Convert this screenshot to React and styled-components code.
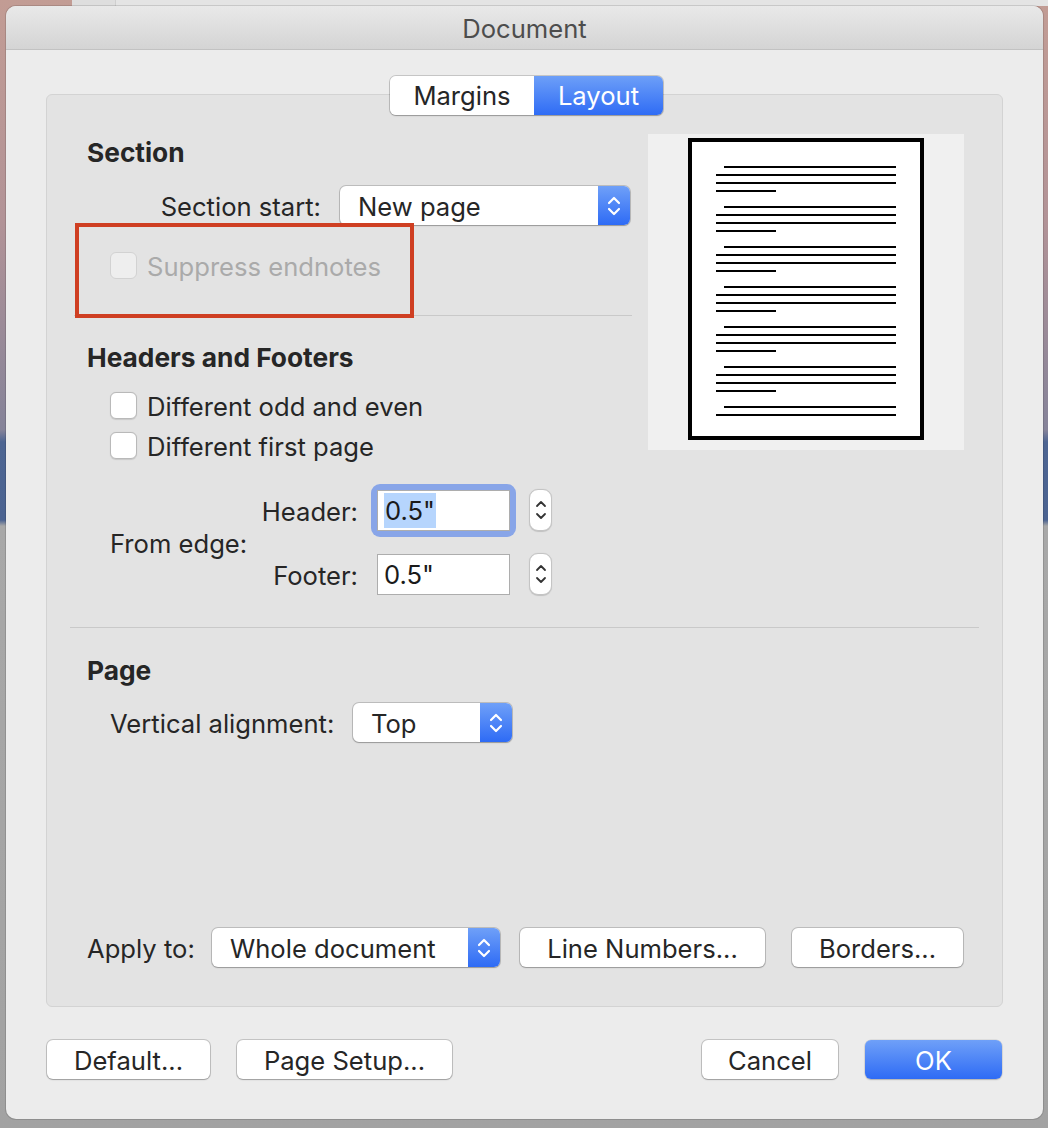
import React from 'react';
import styled, { createGlobalStyle } from 'styled-components';

const FONT = `"Inter", "Noto Sans", "Liberation Sans", sans-serif`;
const TEXT = '#262626';
const FS = '25.6px';

const GlobalStyle = createGlobalStyle`
  html, body { margin: 0; padding: 0; }
  body {
    width: 1048px;
    height: 1128px;
    overflow: hidden;
    font-family: ${FONT};
    -webkit-font-smoothing: antialiased;
  }
`;

const Desktop = styled.div`
  width: 1048px;
  height: 1128px;
  box-sizing: border-box;
  padding: 6px 5px 9px 6px;
  background:
    linear-gradient(to right, transparent 0 72px, #dedede 72px 115px, #cfcfcf 115px 116px, #e4e4e4 116px) top / 100% 6px no-repeat,
    linear-gradient(to bottom, #c29c94 0px, #b29397 220px, #858399 430px, #4d6592 442px, #4b6391 520px, #a8a8a8 526px, #a2a2a2 1128px);
`;

const Window = styled.div`
  position: relative;
  width: 1037px;
  height: 1113px;
  background: #ececec;
  border-radius: 10px;
  overflow: hidden;
  display: flex;
  flex-direction: column;
  box-shadow: 0 0 0 1px rgba(0, 0, 0, 0.12);
`;

const TitleBar = styled.div`
  height: 42px;
  flex: none;
  border-bottom: 1px solid #c2c2c2;
  background: linear-gradient(#e9e9e9, #d4d4d4);
  display: flex;
  align-items: center;
  justify-content: center;
  padding-top: 1px;
  box-sizing: content-box;
  font-size: ${FS};
  color: #4d4d4d;
`;

const Content = styled.div`
  flex: 1;
  display: flex;
  flex-direction: column;
  padding: 26px 40px 0;
`;

const Tabs = styled.div`
  position: relative;
  z-index: 1;
  align-self: center;
  margin-left: 4px;
  display: flex;
  height: 39px;
  border-radius: 6px;
  overflow: hidden;
  box-shadow: 0 0 0 1px rgba(0, 0, 0, 0.16), 0 1px 1.5px rgba(0, 0, 0, 0.22);
`;

const Tab = styled.div`
  width: ${(p) => p.$w}px;
  display: flex;
  align-items: center;
  justify-content: center;
  font-size: ${FS};
  color: ${(p) => (p.$active ? '#fff' : TEXT)};
  background: ${(p) => (p.$active ? 'linear-gradient(#6d9ff8, #2f6cf5)' : '#fff')};
`;

const Panel = styled.div`
  margin-top: -21px;
  height: 913px;
  box-sizing: border-box;
  border: 1px solid #d3d3d3;
  border-radius: 6px;
  background: #e3e3e3;
  padding: 39px 0 39px;
  display: flex;
  flex-direction: column;
`;

const TopSection = styled.div`
  display: flex;
  align-items: flex-start;
  margin-left: 27px;
`;

const LeftCol = styled.div`
  width: 558px;
  display: flex;
  flex-direction: column;
`;

const Heading = styled.div`
  font-size: 26.3px;
  font-weight: 700;
  line-height: 32px;
  height: 32px;
  color: ${TEXT};
  margin-top: ${(p) => p.$mt || 0}px;
  padding-left: ${(p) => p.$indent}px;
`;

const Row = styled.div`
  display: flex;
  align-items: center;
  height: ${(p) => p.$h}px;
  margin-top: ${(p) => p.$mt || 0}px;
  padding-left: ${(p) => p.$indent || 0}px;
  gap: ${(p) => p.$gap || 0}px;
`;

const Label = styled.span`
  font-size: ${FS};
  color: ${(p) => (p.$disabled ? '#aaaaaa' : TEXT)};
  white-space: nowrap;
  padding-top: 2px;
  ${(p) => (p.$w ? `width: ${p.$w}px; text-align: ${p.$left ? 'left' : 'right'}; flex: none;` : '')}
`;

const Box = styled.span`
  width: 27px;
  height: 27px;
  box-sizing: border-box;
  flex: none;
  border-radius: 6px;
  background: ${(p) => (p.$disabled ? '#eeeeee' : '#ffffff')};
  border: 1px solid ${(p) => (p.$disabled ? '#d2d2d2' : '#b9b9b9')};
  box-shadow: ${(p) => (p.$disabled ? 'none' : '0 0.5px 1px rgba(0,0,0,0.12)')};
  margin-right: 10px;
`;

const Separator = styled.div`
  height: 1px;
  background: #c9c9c9;
  margin-top: ${(p) => p.$mt}px;
  margin-left: ${(p) => p.$ml || 0}px;
  margin-right: ${(p) => p.$mr || 0}px;
`;

const PopupBox = styled.div`
  width: ${(p) => p.$w}px;
  height: 39px;
  flex: none;
  display: flex;
  align-items: center;
  background: #fff;
  border-radius: 6px;
  overflow: hidden;
  box-shadow: 0 0 0 1px rgba(0, 0, 0, 0.17), 0 1px 1.5px rgba(0, 0, 0, 0.2);
`;

const PopupText = styled.span`
  flex: 1;
  padding-left: 18px;
  padding-top: 1px;
  font-size: ${FS};
  color: ${TEXT};
  white-space: nowrap;
`;

const PopupArrows = styled.span`
  width: 32px;
  align-self: stretch;
  display: flex;
  align-items: center;
  justify-content: center;
  background: linear-gradient(#6fa0f8, #2e6bf5);
`;

const EdgeBlock = styled.div`
  display: flex;
  align-items: center;
  margin-top: 30px;
  padding-left: 36px;
`;

const EdgeRows = styled.div`
  display: flex;
  flex-direction: column;
  gap: 22px;
`;

const FocusRing = styled.span`
  display: flex;
  margin: -6px;
  padding: 6px;
  border-radius: 9px;
  background: ${(p) => (p.$on ? '#88a5e8' : 'transparent')};
`;

const Field = styled.span`
  width: 133px;
  height: 41px;
  box-sizing: border-box;
  display: flex;
  align-items: center;
  padding-left: 6px;
  background: #fff;
  border: 1px solid #adadad;
  font-size: ${FS};
  color: #1a1a1a;
`;

const Selected = styled.span`
  background: #b6d5fd;
  padding: 2px 1px;
`;

const Stepper = styled.span`
  width: 23px;
  height: 42px;
  box-sizing: border-box;
  flex: none;
  display: flex;
  align-items: center;
  justify-content: center;
  background: #fff;
  border-radius: 9px;
  border: 1px solid #c4c4c4;
  box-shadow: 0 0.5px 1px rgba(0, 0, 0, 0.15);
`;

const PreviewBox = styled.div`
  width: 316px;
  height: 316px;
  flex: none;
  margin-left: 16px;
  background: #f0f0f0;
`;

const Spacer = styled.div`
  flex: 1;
`;

const Gap = styled.span`
  width: ${(p) => p.$w}px;
  flex: none;
`;

const Button = styled.div`
  width: ${(p) => p.$w}px;
  height: 39px;
  flex: none;
  display: flex;
  align-items: center;
  justify-content: center;
  padding-top: 1px;
  box-sizing: border-box;
  border-radius: 6px;
  font-size: ${FS};
  color: ${(p) => (p.$primary ? '#fff' : TEXT)};
  background: ${(p) => (p.$primary ? 'linear-gradient(#6fa0f8, #2e6bf5)' : '#fff')};
  box-shadow: ${(p) =>
    p.$primary
      ? '0 0 0 0.5px rgba(0,0,0,0.12), 0 1px 1.5px rgba(0,0,0,0.2)'
      : '0 0 0 1px rgba(0,0,0,0.17), 0 1px 1.5px rgba(0,0,0,0.2)'};
`;

const Footer = styled.div`
  display: flex;
  align-items: center;
  margin-top: 33px;
  padding: 0 1px;
  gap: 27px;
`;

const Annotation = styled.div`
  position: absolute;
  left: 69px;
  top: 217px;
  width: 339px;
  height: 95px;
  box-sizing: border-box;
  border: 4px solid #cf3f22;
  pointer-events: none;
`;

const PopupChevrons = () => (
  <svg width="16" height="24" viewBox="0 0 16 24" fill="none">
    <path d="M3 9 L8 4 L13 9" stroke="#fff" strokeWidth="2.2" strokeLinecap="round" strokeLinejoin="round" />
    <path d="M3 15 L8 20 L13 15" stroke="#fff" strokeWidth="2.2" strokeLinecap="round" strokeLinejoin="round" />
  </svg>
);

const StepChevrons = () => (
  <svg width="14" height="28" viewBox="0 0 14 28" fill="none">
    <path d="M3 10 L7 6 L11 10" stroke="#333" strokeWidth="1.8" strokeLinecap="round" strokeLinejoin="round" />
    <path d="M3 18 L7 22 L11 18" stroke="#333" strokeWidth="1.8" strokeLinecap="round" strokeLinejoin="round" />
  </svg>
);

const Popup = ({ w, children }) => (
  <PopupBox $w={w}>
    <PopupText>{children}</PopupText>
    <PopupArrows>
      <PopupChevrons />
    </PopupArrows>
  </PopupBox>
);

const PagePreview = () => {
  const lines = [];
  for (let p = 0; p < 7; p++) {
    const base = 32 + p * 40;
    lines.push(<rect key={`a${p}`} x="76" y={base} width="172" height="2" />);
    lines.push(<rect key={`b${p}`} x="68" y={base + 8} width="180" height="2" />);
    if (p < 6) {
      lines.push(<rect key={`c${p}`} x="68" y={base + 16} width="180" height="2" />);
      lines.push(<rect key={`d${p}`} x="68" y={base + 24} width="60" height="2" />);
    }
  }
  return (
    <svg width="316" height="316" viewBox="0 0 316 316">
      <rect x="42" y="6" width="232" height="298" fill="#fff" stroke="#000" strokeWidth="4" />
      <g fill="#000">{lines}</g>
    </svg>
  );
};

export default function App() {
  return (
    <>
      <GlobalStyle />
      <Desktop>
        <Window>
          <TitleBar>Document</TitleBar>
          <Content>
            <Tabs>
              <Tab $w={144}>Margins</Tab>
              <Tab $w={129} $active>Layout</Tab>
            </Tabs>
            <Panel>
              <TopSection>
                <LeftCol>
                  <Heading $mt={3} $indent={13}>Section</Heading>
                  <Row $h={39} $mt={17} $indent={36} $gap={19}>
                    <Label $w={211}>Section start:</Label>
                    <Popup w={290}>New page</Popup>
                  </Row>
                  <Row $h={28} $mt={26} $indent={36}>
                    <Box $disabled />
                    <Label $disabled>Suppress endnotes</Label>
                  </Row>
                  <Separator $mt={36} />
                  <Heading $mt={26} $indent={13}>Headers and Footers</Heading>
                  <Row $h={28} $mt={17} $indent={36}>
                    <Box />
                    <Label>Different odd and even</Label>
                  </Row>
                  <Row $h={28} $mt={12} $indent={36}>
                    <Box />
                    <Label>Different first page</Label>
                  </Row>
                  <EdgeBlock>
                    <Label $w={148} $left>From edge:</Label>
                    <EdgeRows>
                      <Row $h={42} $gap={19}>
                        <Label $w={100}>Header:</Label>
                        <FocusRing $on>
                          <Field>
                            <Selected>0.5"</Selected>
                          </Field>
                        </FocusRing>
                        <Stepper>
                          <StepChevrons />
                        </Stepper>
                      </Row>
                      <Row $h={42} $gap={19}>
                        <Label $w={100}>Footer:</Label>
                        <FocusRing>
                          <Field>0.5"</Field>
                        </FocusRing>
                        <Stepper>
                          <StepChevrons />
                        </Stepper>
                      </Row>
                    </EdgeRows>
                  </EdgeBlock>
                </LeftCol>
                <PreviewBox>
                  <PagePreview />
                </PreviewBox>
              </TopSection>
              <Separator $mt={32} $ml={23} $mr={23} />
              <Heading $mt={27} $indent={40}>Page</Heading>
              <Row $h={39} $mt={16} $indent={63}>
                <Label $w={225} $left>Vertical alignment:</Label>
                <Gap $w={18} />
                <Popup w={159}>Top</Popup>
              </Row>
              <Spacer />
              <Row $h={39} $indent={40}>
                <Label $w={106} $left>Apply to:</Label>
                <Gap $w={19} />
                <Popup w={288}>Whole document</Popup>
                <Gap $w={20} />
                <Button $w={245}>Line Numbers...</Button>
                <Gap $w={27} />
                <Button $w={171}>Borders...</Button>
              </Row>
            </Panel>
            <Footer>
              <Button $w={163}>Default...</Button>
              <Button $w={215}>Page Setup...</Button>
              <Spacer />
              <Button $w={136}>Cancel</Button>
              <Button $w={137} $primary>OK</Button>
            </Footer>
          </Content>
          <Annotation />
        </Window>
      </Desktop>
    </>
  );
}
